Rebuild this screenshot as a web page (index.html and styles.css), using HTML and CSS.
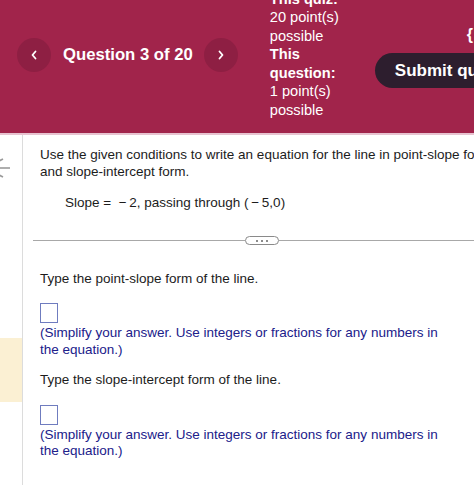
FILE: index.html
```html
<!DOCTYPE html>
<html lang="en">
<head>
<meta charset="utf-8">
<title>Question 3 of 20</title>
<link rel="stylesheet" href="styles.css">
</head>
<body>
<header class="topbar">
  <div class="nav">
    <button class="circle prev" aria-label="Previous question">
      <svg width="8" height="10" viewBox="0 0 8 10"><path d="M5.5 1.5 L2.5 5 L5.5 8.5" fill="none" stroke="#fff" stroke-width="1.8" stroke-linecap="round" stroke-linejoin="round"/></svg>
    </button>
    <h1 class="qtitle">Question 3 of 20</h1>
    <button class="circle next" aria-label="Next question">
      <svg width="8" height="10" viewBox="0 0 8 10"><path d="M2.5 1.5 L5.5 5 L2.5 8.5" fill="none" stroke="#fff" stroke-width="1.8" stroke-linecap="round" stroke-linejoin="round"/></svg>
    </button>
  </div>
  <div class="points">
    <div class="strong">This quiz:</div>
    <div>20 point(s) possible</div>
    <div class="strong">This question:</div>
    <div>1 point(s) possible</div>
  </div>
  <div class="actions">
    <span class="glyph">{</span>
    <button class="submit">Submit quiz</button>
  </div>
</header>
<div class="page">
  <aside class="rail">
    <svg class="rail-icon" width="14" height="22" viewBox="0 0 14 22">
      <path d="M-1 4 L3 2" stroke="#9a9a9a" stroke-width="1.6" fill="none"/>
      <path d="M0 11 L10 11" stroke="#9a9a9a" stroke-width="1.6" fill="none"/>
      <path d="M-1 18 L3 20" stroke="#9a9a9a" stroke-width="1.6" fill="none"/>
    </svg>
    <div class="rail-mark"></div>
  </aside>
  <main class="content">
    <p class="prompt">Use the given conditions to write an equation for the line in point-slope form and slope-intercept form.</p>
    <p class="given">Slope&nbsp;= &nbsp;&minus;&thinsp;2, passing through (&thinsp;&minus;&thinsp;5,0)</p>
    <div class="divider">
      <span class="rule"></span>
      <span class="more"><i></i><i></i><i></i></span>
      <span class="rule"></span>
    </div>
    <div class="answers">
      <p class="ask">Type the point-slope form of the line.</p>
      <div class="box"></div>
      <p class="note">(Simplify your answer. Use integers or fractions for any numbers in the equation.)</p>
      <p class="ask second">Type the slope-intercept form of the line.</p>
      <div class="box"></div>
      <p class="note">(Simplify your answer. Use integers or fractions for any numbers in the equation.)</p>
    </div>
  </main>
</div>
</body>
</html>
```
FILE: styles.css
```css
html, body {
  margin: 0;
  padding: 0;
  width: 474px;
  height: 485px;
  overflow: hidden;
  background: #fff;
  font-family: "Liberation Sans", Arial, sans-serif;
}

.topbar {
  display: flex;
  align-items: center;
  height: 109px;
  padding-bottom: 24px;
  background: #a1244b;
  border-bottom: 2px solid #e7c3d0;
  overflow: hidden;
  color: #fff;
}

.nav {
  display: flex;
  align-items: center;
  flex-shrink: 0;
  padding-left: 17px;
}

.circle {
  width: 34px;
  height: 34px;
  border: 0;
  border-radius: 50%;
  background: #8e1f43;
  display: flex;
  align-items: center;
  justify-content: center;
  padding: 0;
}

.qtitle {
  margin: 0 11px 0 12px;
  font-size: 16.7px;
  font-weight: bold;
  line-height: 20px;
  white-space: nowrap;
}

.points {
  flex-shrink: 0;
  width: 84px;
  margin-left: 32px;
  font-size: 14.6px;
  line-height: 18.5px;
}

.points .strong {
  font-weight: bold;
}

.actions {
  flex-shrink: 0;
  align-self: flex-start;
  margin-top: 25px;
  margin-left: 21px;
  display: flex;
  flex-direction: column;
  align-items: flex-start;
  gap: 8px;
}

.glyph {
  margin-left: 92px;
  font-size: 16px;
  font-weight: bold;
  line-height: 20px;
}

.submit {
  height: 35px;
  padding: 0 20px;
  border: 0;
  border-radius: 18px;
  background: #2d1e2e;
  color: #fff;
  font-family: "Liberation Sans", Arial, sans-serif;
  font-size: 17px;
  font-weight: bold;
  white-space: nowrap;
}

.page {
  display: flex;
  height: 350px;
}

.rail {
  width: 22px;
  flex-shrink: 0;
  border-right: 1px solid #dcdcdc;
  display: flex;
  flex-direction: column;
}

.rail-icon {
  margin-top: 22px;
  display: block;
}

.rail-mark {
  margin-top: 159px;
  height: 64px;
  background: #fbf0d3;
}

.content {
  padding: 12px 0 0 17px;
  font-size: 13.5px;
  line-height: 16.5px;
  color: #1c1c1c;
}

.content p {
  margin: 0;
}

.prompt {
  width: 460px;
}

.given {
  margin-top: 15px !important;
  padding-left: 25px;
  white-space: nowrap;
}

.divider {
  display: flex;
  align-items: center;
  width: 458px;
  height: 10px;
  margin: 24px 0 0 -7px;
}

.rule {
  flex: 1;
  height: 1px;
  background: #a8a8a8;
}

.more {
  width: 34px;
  height: 9px;
  box-sizing: border-box;
  border: 1px solid #8a8a8a;
  border-radius: 5px;
  background: #fff;
  display: flex;
  align-items: center;
  justify-content: center;
  gap: 3px;
}

.more i {
  width: 2px;
  height: 2px;
  border-radius: 50%;
  background: #666;
}

.answers {
  width: 415px;
  margin-top: 25px;
}

.box {
  width: 18px;
  height: 20px;
  box-sizing: border-box;
  border: 1.5px solid #6f7cbf;
  margin-top: 16px;
}

.note {
  margin-top: 2px !important;
  color: #20208a;
}

.ask.second {
  margin-top: 14px;
}
```
